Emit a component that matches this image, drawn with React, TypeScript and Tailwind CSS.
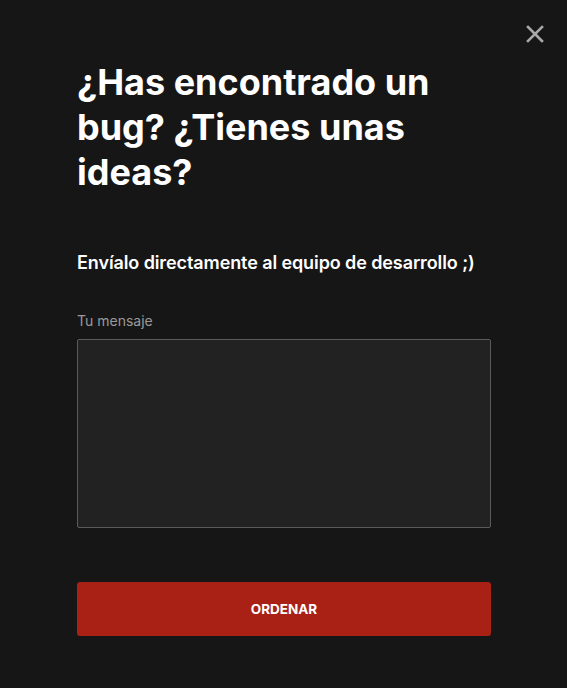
import { useState } from "react";

export default function App() {
  const [message, setMessage] = useState("");

  return (
    <div className="relative min-h-[688px] w-full bg-[#161616] font-['Inter',sans-serif] text-white">
      <button
        type="button"
        aria-label="Cerrar"
        className="absolute right-[23px] top-[25px] text-[#a8a8a8] hover:text-white"
      >
        <svg width="18" height="18" viewBox="0 0 18 18" fill="none" stroke="currentColor" strokeWidth="2.6" strokeLinecap="square">
          <path d="M2 2L16 16M16 2L2 16" />
        </svg>
      </button>

      <div className="pl-[77px] pr-[76px] pt-[60px] pb-[52px]">
        <h1 className="text-[36px] font-bold leading-[45px]">
          ¿Has encontrado un bug? ¿Tienes unas ideas?
        </h1>

        <p className="mt-[54px] text-[18px] font-semibold leading-[27px] tracking-[-0.1px]">
          Envíalo directamente al equipo de desarrollo ;)
        </p>

        <label className="mt-[35px] block">
          <span className="block text-[14px] leading-5 text-[#9a9a9a]">Tu mensaje</span>
          <textarea
            value={message}
            onChange={(e) => setMessage(e.target.value)}
            className="mt-2 block h-[189px] w-full resize-none rounded-[2px] border border-[#5a5a5a] bg-[#222222] p-3 text-sm text-white outline-none"
          />
        </label>

        <button
          type="button"
          className="mt-[54px] flex h-[54px] w-full items-center justify-center rounded-[3px] bg-[#a82114] text-[13.5px] font-bold uppercase text-white"
        >
          Ordenar
        </button>
      </div>
    </div>
  );
}
